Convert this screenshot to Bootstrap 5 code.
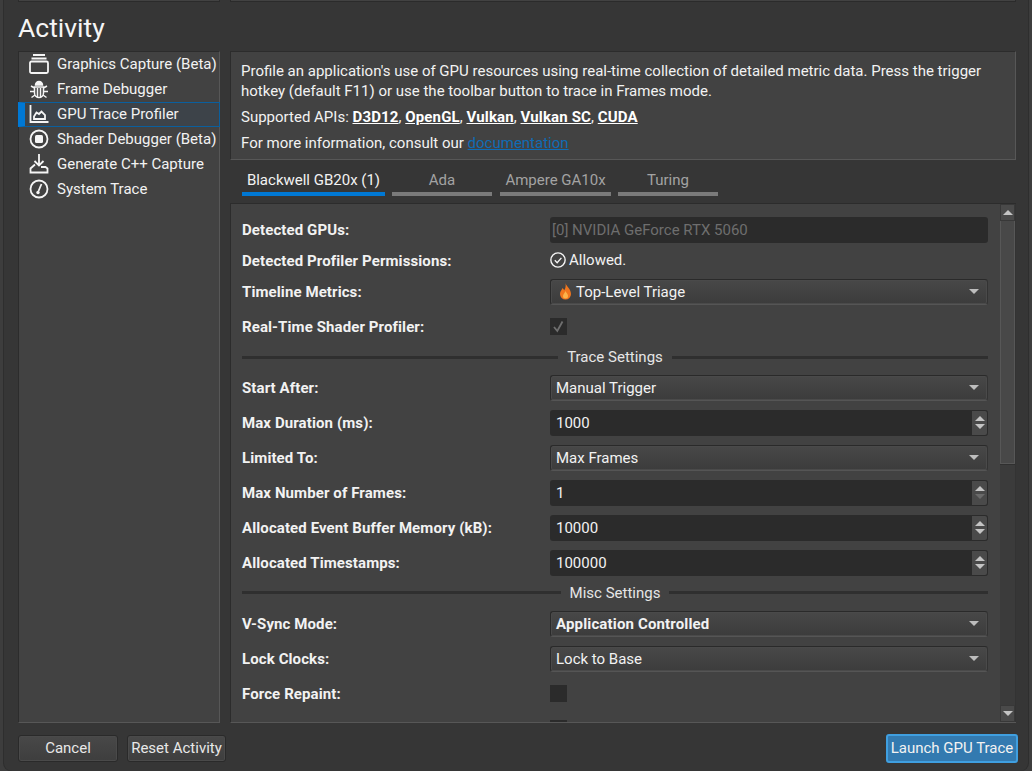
<!DOCTYPE html>
<html lang="en"><head><meta charset="utf-8"><title>Activity</title>
<link href="https://cdn.jsdelivr.net/npm/bootstrap@5.3.0/dist/css/bootstrap.min.css" rel="stylesheet">
<style>
html,body{height:771px;margin:0;overflow:hidden;background:#3d3d3d}
body{font-family:Roboto,"Liberation Sans",sans-serif;font-size:15px;color:#f2f2f2;line-height:1.2}
.win{height:771px;margin:0 4px;padding:0 12px 0 14px;background:#363636;border-radius:0 0 8px 8px;display:flex;flex-direction:column;box-shadow:-1px 0 0 #2e2e2e,1px 0 0 #2e2e2e}
.strips{height:2px;display:flex;gap:10px}
.strip{background:#424242;border:solid #2b2b2b;border-width:0 1px 1px}
.s1{width:202px}.s2{flex:1}
.title{height:49px;font-size:26.5px;line-height:51px;font-weight:400;margin:0;color:#f5f5f5}
.main{height:672px;display:flex;gap:10px}
.side{width:202px;background:#424242;border:1px solid #2c2c2c;border-bottom-color:#575757;border-right-color:#575757;border-radius:0;flex:none;padding-top:0}
.side .list-group-item{height:25px;background:transparent;border:0;color:#f2f2f2;padding:0 0 2px 10px;display:flex;align-items:center;gap:8px;white-space:nowrap;border-radius:0;font-size:15px}
.side .list-group-item svg{width:20px;height:20px;flex:none}
.side .list-group-item+.list-group-item.active{background:#3d4349;border:1px solid #0a5f9e;border-left:7px solid #0078d4;margin:0 -1px;padding-left:4px;padding-bottom:2px;color:#f2f2f2}
.right{flex:1;display:flex;flex-direction:column;min-width:0}
.info{height:110px;background:#424242;border:1px solid #2c2c2c;border-bottom-color:#575757;border-right-color:#575757;padding:10px 10px 0;border-radius:0;color:#f2f2f2}
.info p{margin:0;line-height:19.5px}
.info p+p{margin-top:7px}
.info p+p{line-height:19px}
.info b{font-weight:700;text-decoration:underline;color:#fff;letter-spacing:.15px}
.info a{color:#0f6cb5}
.tabs{height:44px;gap:7px;padding:8px 0 0 12px;border:0;flex-wrap:nowrap;margin:0}
.tabs .nav-link{border:0;border-bottom:4px solid #7a7a7a;border-radius:0;color:#a3a3a3;background:none;padding:1px 0 0;height:28px;font-size:15px;text-align:center;line-height:22px}
.tabs .nav-link.active{color:#f2f2f2;background:none;border-bottom-color:#0078d4}
.t1{width:143px}.t2{width:100px}.t3{width:111px;margin-left:1px}.t4{width:100px}
.panel{height:520px;flex:none;background:#424242;border:1px solid #2c2c2c;border-bottom-color:#575757;display:flex;overflow:hidden;border-right:0}
.form{flex:1;padding:10px 12px 0 11px;min-width:0;overflow:hidden}
.r{height:31px;display:flex;align-items:center}
.r.t{height:35px}
.m2{margin-top:2px}
.lab{width:308px;flex:none;font-weight:700;font-size:15px;letter-spacing:.1px;color:#f2f2f2;white-space:nowrap}
.val{flex:1;min-width:0}
.ok{padding-bottom:2px;gap:3px}
.ro{height:26px;background:#2b2b2b;color:#6e6e6e;border:0;border-radius:3px;padding:0 2px;line-height:26px;font-size:15px}
.sel{width:100%;height:26px;display:flex;align-items:center;justify-content:space-between;background:linear-gradient(#484848,#3c3c3c);border:1px solid #2a2a2a;border-bottom-color:#555;border-right-color:#333;border-radius:3px;color:#f2f2f2;padding:2px 8px 0 5px;font-size:15px;box-shadow:inset 0 0 0 1px #4a4a4a}
.sel.fw-bold{letter-spacing:.15px}
.sel:hover,.sel:active{color:#f2f2f2;background:linear-gradient(#484848,#3c3c3c);border-color:#2a2a2a}
.sel i{width:0;height:0;border:solid transparent;border-width:5px 5px 0;border-top-color:#bdbdbd;display:block;margin-top:-2px}
.sel .g{display:flex;align-items:center;gap:4px;margin-left:3px}
.sel .g svg{margin-top:-2px}
.num{height:26px;display:flex;background:#2b2b2b;border-radius:3px;align-items:center;padding-left:6px;line-height:26px}
.num .form-control{flex:1;background:none;border:0;color:#f2f2f2;padding:0;font-size:15px;box-shadow:none;line-height:26px}
.spin{width:17px;height:26px;background:#4a4a4a;border:1px solid #2b2b2b;display:flex;flex-direction:column;align-items:center;justify-content:center;gap:3px;flex:none;border-radius:0 3px 3px 0}
.spin i{width:0;height:0;border:solid transparent;display:block}
.spin i.u{border-width:0 5px 5px;border-bottom-color:#c4c4c4}
.spin i.d{border-width:5px 5px 0;border-top-color:#c4c4c4}
.spin i.d.off{border-top-color:#6a6a6a}
.cb{width:17px;height:17px;background:#2b2b2b;display:block;flex:none}
.cb svg{display:block;width:17px;height:17px}
.sec{height:24px;display:flex;align-items:center;gap:9px;color:#e6e6e6;margin-top:2px;padding-bottom:2px}
.sec::before,.sec::after{content:"";height:3px;background:#2f2f2f;flex:1}
.sec2{flex:none;height:25px;margin-top:1px}
.sb{width:16px;flex:none;background:#3b3b3b;border-right:1px solid #333;display:flex;flex-direction:column}
.sb .b{height:17px;background:#4a4a4a;display:flex;align-items:center;justify-content:center;border:1px solid #383838;flex:none}
.sb .b i{width:0;height:0;border:solid transparent;display:block}
.sb .thumb{height:243px;background:#484848;border:1px solid #575757;border-top:0;box-shadow:0 1px 0 #303030;flex:none}
.sb .fill{flex:1}
.foot{flex:1;display:flex;align-items:center;padding-top:2px;gap:9px}
.btn-d{height:27px;padding:0;background:linear-gradient(#484848,#3e3e3e);border:1px solid #2a2a2a;border-radius:3px;color:#e8e8e8;font-size:15px;box-shadow:inset 0 0 0 1px #4a4a4a;line-height:1}
.btn-d:hover{background:#444;color:#e8e8e8;border-color:#2a2a2a}
.cancel{width:100px}.reset{width:99px}
.launch{width:132px;height:29px;padding:0;margin:0 -2px 0 auto;background:#337ab0;border:2px solid #3f9fe0;border-radius:3px;color:#f2f2f2;font-size:15px;line-height:1}
.launch:hover{background:#337ab0;color:#f2f2f2;border-color:#3f9fe0}
</style></head><body>
<div class="win">
<div class="strips"><div class="strip s1"></div><div class="strip s2"></div></div>
<h1 class="title">Activity</h1>
<div class="main">
<div class="side list-group">
<a class="list-group-item"><svg viewBox="0 0 20 20" fill="none" stroke="#f5f5f5" stroke-width="1.8"><path d="M4 1h12M2.500 4.500h15"/><rect x="1" y="7.500" width="18" height="11.500" rx="1.500"/></svg>Graphics Capture (Beta)</a>
<a class="list-group-item"><svg viewBox="0 0 20 20" fill="none" stroke="#f5f5f5" stroke-width="1.500"><path d="M6.500 6a3.500 3.500 0 0 1 7 0z" fill="#f5f5f5"/><path d="M5.500 8h9v6a4.500 4.500 0 0 1-9 0zM8.500 9v9M11.500 9v9M5.500 9 2 7M14.500 9 18 7M5 12.500H1M15 12.500h4M6 16l-3.500 2.500M14 16l3.500 2.500"/></svg>Frame Debugger</a>
<a class="list-group-item active"><svg viewBox="0 0 20 20" fill="none" stroke="#f5f5f5" stroke-width="1.800"><path d="M1.500 1v17h18"/><path d="M5 15v-2.500l2.500-4 2.500 1.500 2.500-2.500 3.500 3.500v4z"/></svg>GPU Trace Profiler</a>
<a class="list-group-item"><svg viewBox="0 0 20 20" fill="none" stroke="#f5f5f5" stroke-width="1.800"><circle cx="10" cy="10" r="8.500"/><rect x="6" y="6" width="8" height="8" rx="1.500" fill="#f5f5f5" stroke="none"/></svg>Shader Debugger (Beta)</a>
<a class="list-group-item"><svg viewBox="0 0 20 20" fill="none" stroke="#f5f5f5" stroke-width="1.800"><path d="M10 0v11M5.500 7l4.500 4.500L14.500 7M6 10.500 1.500 14.500v4h17v-4l-2-1.500H12"/></svg>Generate C++ Capture</a>
<a class="list-group-item"><svg viewBox="0 0 20 20" fill="none" stroke="#f5f5f5" stroke-width="1.800"><circle cx="10" cy="10" r="8.500"/><path d="M12.500 5 9.500 12"/><circle cx="9" cy="13.500" r="1.700" fill="#f5f5f5" stroke="none"/></svg>System Trace</a>
</div>
<div class="right">
<div class="info card">
<p>Profile an application's use of GPU resources using real-time collection of detailed metric data. Press the trigger hotkey (default F11) or use the toolbar button to trace in Frames mode.</p>
<p>Supported APIs: <b>D3D12</b>, <b>OpenGL</b>, <b>Vulkan</b>, <b>Vulkan SC</b>, <b>CUDA</b></p>
<p>For more information, consult our <a href="#">documentation</a></p>
</div>
<ul class="nav nav-tabs tabs">
<li class="nav-item"><a class="nav-link active t1" href="#">Blackwell GB20x (1)</a></li>
<li class="nav-item"><a class="nav-link t2" href="#">Ada</a></li>
<li class="nav-item"><a class="nav-link t3" href="#">Ampere GA10x</a></li>
<li class="nav-item"><a class="nav-link t4" href="#">Turing</a></li>
</ul>
<div class="panel">
<div class="form">
<div class="r"><div class="lab">Detected GPUs:</div><div class="val"><div class="ro form-control">[0] NVIDIA GeForce RTX 5060</div></div></div>
<div class="r"><div class="lab">Detected Profiler Permissions:</div><div class="val d-flex align-items-center ok"><svg width="16" height="16" viewBox="0 0 15 15" fill="none" stroke="#f5f5f5" stroke-width="1.300"><circle cx="7.500" cy="7.500" r="6.700"/><path d="M4.500 7.800l2.200 2.200 4-4.500"/></svg>Allowed.</div></div>
<div class="r"><div class="lab">Timeline Metrics:</div><div class="val"><button class="btn sel" type="button"><span class="g"><svg width="13" height="17" viewBox="0 0 13 17"><path d="M6.500 0C7 3 12 6 12 11a5.500 5.500 0 0 1-11 0c0-3 2-4 2.500-6 1 1 1.500 1.500 1.500 2.500C6.500 5.500 7 3 6.500 0z" fill="#f0761e"/><path d="M6.500 8c.5 1.500 2.500 3 2.500 5a2.500 2.500 0 0 1-5 0c0-2 2-3 2.500-5z" fill="#fbb24a"/></svg>Top-Level Triage</span><i></i></button></div></div>
<div class="r t m2"><div class="lab">Real-Time Shader Profiler:</div><div class="val"><span class="cb"><svg viewBox="0 0 17 17" fill="none" stroke="#6f6f6f" stroke-width="1.800"><path d="M4 9l3.300 4L12.500 3.500"/></svg></span></div></div>
<div class="sec">Trace Settings</div>
<div class="r t"><div class="lab">Start After:</div><div class="val"><button class="btn sel" type="button">Manual Trigger<i></i></button></div></div>
<div class="r t"><div class="lab">Max Duration (ms):</div><div class="val"><div class="num"><div class="form-control">1000</div><div class="spin"><i class="u"></i><i class="d"></i></div></div></div></div>
<div class="r t"><div class="lab">Limited To:</div><div class="val"><button class="btn sel" type="button">Max Frames<i></i></button></div></div>
<div class="r t"><div class="lab">Max Number of Frames:</div><div class="val"><div class="num"><div class="form-control">1</div><div class="spin"><i class="u"></i><i class="d off"></i></div></div></div></div>
<div class="r t"><div class="lab">Allocated Event Buffer Memory (kB):</div><div class="val"><div class="num"><div class="form-control">10000</div><div class="spin"><i class="u"></i><i class="d"></i></div></div></div></div>
<div class="r t"><div class="lab">Allocated Timestamps:</div><div class="val"><div class="num"><div class="form-control">100000</div><div class="spin"><i class="u"></i><i class="d"></i></div></div></div></div>
<div class="sec sec2">Misc Settings</div>
<div class="r t"><div class="lab">V-Sync Mode:</div><div class="val"><button class="btn sel fw-bold" type="button">Application Controlled<i></i></button></div></div>
<div class="r t"><div class="lab">Lock Clocks:</div><div class="val"><button class="btn sel" type="button">Lock to Base<i></i></button></div></div>
<div class="r t"><div class="lab">Force Repaint:</div><div class="val"><span class="cb"></span></div></div>
<div class="r t"><div class="lab">Enable NVTX:</div><div class="val"><span class="cb"><svg viewBox="0 0 17 17" fill="none" stroke="#e0e0e0" stroke-width="1.800"><path d="M4 9l3.300 4L12.500 3.500"/></svg></span></div></div>
</div>
<div class="sb">
<div class="b"><i style="border-width:0 5px 5px;border-bottom-color:#c4c4c4"></i></div>
<div class="thumb"></div><div class="fill"></div>
<div class="b"><i style="border-width:5px 5px 0;border-top-color:#c4c4c4"></i></div>
</div>
</div>
</div>
</div>
<div class="foot">
<button class="btn btn-d cancel" type="button">Cancel</button>
<button class="btn btn-d reset" type="button">Reset Activity</button>
<button class="btn launch" type="button">Launch GPU Trace</button>
</div>
</div>
<script src="https://cdn.jsdelivr.net/npm/bootstrap@5.3.0/dist/js/bootstrap.bundle.min.js"></script>
</body></html>
